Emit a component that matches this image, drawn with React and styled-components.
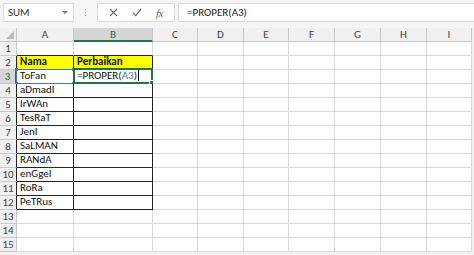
import React from 'react';
import styled, { createGlobalStyle } from 'styled-components';

const GlobalStyle = createGlobalStyle`
  html, body {
    margin: 0;
    padding: 0;
    background: #ffffff;
    overflow: hidden;
  }
  body {
    font-family: Carlito, Lato, "Liberation Sans", sans-serif;
  }
`;

const GREEN = '#217346';
const BLUE = '#4472c4';
const GRID = '#d9d9d9';
const HEAD_LINE = '#c8c8c8';

const columns = ['A', 'B', 'C', 'D', 'E', 'F', 'G', 'H', 'I'];
const widths = [17, 57, 79, 45, 46, 45, 46, 46, 46, 45];

const names = {
  3: 'ToFan',
  4: 'aDmadI',
  5: 'IrWAn',
  6: 'TesRaT',
  7: 'JenI',
  8: 'SaLMAN',
  9: 'RANdA',
  10: 'enGgeI',
  11: 'RoRa',
  12: 'PeTRus',
};

const Page = styled.div`
  width: 474px;
  height: 255px;
  display: flex;
  flex-direction: column;
  background: #f1f1f1;
  overflow: hidden;
`;

const FormulaBar = styled.div`
  height: 28px;
  box-sizing: border-box;
  padding: 3px 0 6px 3px;
  display: flex;
  align-items: stretch;
  background: #f5f5f5;
`;

const NameBox = styled.div`
  width: 71px;
  box-sizing: border-box;
  background: #fff;
  border: 1px solid #dcdcdc;
  display: flex;
  align-items: center;
  justify-content: space-between;
  padding: 0 4px 0 4px;
  font-size: 11px;
  color: #333;
`;

const Arrow = styled.span`
  width: 0;
  height: 0;
  border-left: 3px solid transparent;
  border-right: 3px solid transparent;
  border-top: 3px solid #7a7a7a;
  margin-right: 1px;
`;

const Dots = styled.div`
  width: 23px;
  display: flex;
  flex-direction: column;
  align-items: center;
  justify-content: center;
  gap: 2px;
`;

const Dot = styled.span`
  width: 1px;
  height: 1px;
  background: #b8b8b8;
`;

const ActionBox = styled.div`
  width: 78px;
  box-sizing: border-box;
  background: #fff;
  border: 1px solid #dcdcdc;
  display: flex;
  align-items: center;
  justify-content: space-around;
  padding: 0 4px;
`;

const Fx = styled.span`
  font-family: "Liberation Serif", serif;
  font-style: italic;
  font-size: 11px;
  color: #6a6a6a;
  letter-spacing: -0.5px;
`;

const FormulaInput = styled.div`
  flex: 1;
  margin-left: 3px;
  background: #fff;
  border: 1px solid #dcdcdc;
  border-right: none;
  display: flex;
  align-items: center;
  padding-left: 8px;
  font-size: 11px;
  color: #222;
`;

const Sheet = styled.div`
  display: grid;
  grid-template-columns: ${widths.map((w) => `${w}px`).join(' ')};
  grid-auto-rows: 14px;
  background: #fff;
  width: 472px;
`;

const Head = styled.div`
  box-sizing: border-box;
  background: ${(p) => (p.$active ? '#d6d6d6' : '#f0f0f0')};
  color: ${(p) => (p.$active ? GREEN : '#444')};
  border-right: ${(p) =>
    p.$greenRight ? `2px solid ${GREEN}` : p.$boxEdge ? '1px solid #222' : `1px solid ${HEAD_LINE}`};
  border-bottom: ${(p) => (p.$greenBottom ? `2px solid ${GREEN}` : `1px solid ${HEAD_LINE}`)};
  font-size: 11px;
  display: flex;
  align-items: center;
  justify-content: center;
  position: relative;
  line-height: 1;
`;

const Corner = styled.span`
  position: absolute;
  right: 2px;
  bottom: 2px;
  width: 0;
  height: 0;
  border-left: 8px solid transparent;
  border-bottom: 8px solid #b9b9b9;
`;

const Cell = styled.div`
  box-sizing: border-box;
  position: relative;
  background: ${(p) => (p.$yellow ? '#ffff00' : '#fff')};
  border-right: 1px solid ${(p) => (p.$box ? '#222' : GRID)};
  border-bottom: 1px solid ${(p) => (p.$box || p.$boxTop ? '#222' : GRID)};
  font-size: 11px;
  font-weight: ${(p) => (p.$bold ? 700 : 400)};
  color: #111;
  padding: 0 0 1px 3px;
  display: flex;
  align-items: flex-end;
  white-space: nowrap;
  line-height: 12px;
`;

const RefFrame = styled.span`
  position: absolute;
  left: -1px;
  top: -1px;
  right: -1px;
  bottom: -1px;
  border: 1px solid ${BLUE};
  pointer-events: none;
`;

const Knob = styled.span`
  position: absolute;
  width: 3px;
  height: 3px;
  background: ${BLUE};
  ${(p) => (p.$top ? 'top: -2px;' : 'bottom: -2px;')}
  ${(p) => (p.$left ? 'left: -2px;' : 'right: -2px;')}
`;

const SelectFrame = styled.span`
  position: absolute;
  left: -1px;
  top: -2px;
  right: -1px;
  bottom: -1px;
  border: 2px solid ${GREEN};
  pointer-events: none;
`;

const FillHandle = styled.span`
  position: absolute;
  right: -4px;
  bottom: -4px;
  width: 4px;
  height: 4px;
  background: ${GREEN};
  border: 1px solid #fff;
`;

const RefText = styled.span`
  color: ${BLUE};
`;

const Caret = styled.span`
  display: inline-block;
  width: 1px;
  height: 11px;
  background: #000;
  margin-left: 1px;
  vertical-align: -2px;
`;

function CloseIcon() {
  return (
    <svg width="9" height="9" viewBox="0 0 9 9">
      <path d="M1 1 L8 8 M8 1 L1 8" stroke="#6b6b6b" strokeWidth="1.1" fill="none" />
    </svg>
  );
}

function CheckIcon() {
  return (
    <svg width="10" height="9" viewBox="0 0 10 9">
      <path d="M1 4.8 L3.8 7.6 L9 1.2" stroke="#6b6b6b" strokeWidth="1.3" fill="none" />
    </svg>
  );
}

function EditingFormula() {
  return (
    <span>
      =PROPER(<RefText>A3</RefText>)<Caret />
    </span>
  );
}

function Row({ n }) {
  const inBox = n >= 2 && n <= 12;
  const cells = columns.map((col) => {
    const isData = col === 'A' || col === 'B';
    let content = null;
    if (n === 2 && col === 'A') content = 'Nama';
    if (n === 2 && col === 'B') content = 'Perbaikan';
    if (col === 'A' && names[n]) content = names[n];
    if (n === 3 && col === 'B') content = <EditingFormula />;

    return (
      <Cell
        key={col}
        $box={inBox && isData}
        $boxTop={n === 1 && isData}
        $yellow={n === 2 && isData}
        $bold={n === 2 && isData}
      >
        {content}
        {n === 3 && col === 'A' && (
          <RefFrame>
            <Knob $top $left />
            <Knob $top />
            <Knob $left />
            <Knob />
          </RefFrame>
        )}
        {n === 3 && col === 'B' && (
          <SelectFrame>
            <FillHandle />
          </SelectFrame>
        )}
      </Cell>
    );
  });

  return (
    <>
      <Head $active={n === 3} $greenRight={n === 3} $boxEdge={inBox}>
        {n}
      </Head>
      {cells}
    </>
  );
}

export default function App() {
  const rows = Array.from({ length: 15 }, (_, i) => i + 1);
  return (
    <Page>
      <GlobalStyle />
      <FormulaBar>
        <NameBox>
          SUM
          <Arrow />
        </NameBox>
        <Dots>
          <Dot />
          <Dot />
          <Dot />
        </Dots>
        <ActionBox>
          <CloseIcon />
          <CheckIcon />
          <Fx>fx</Fx>
        </ActionBox>
        <FormulaInput>=PROPER(A3)</FormulaInput>
      </FormulaBar>
      <Sheet>
        <Head>
          <Corner />
        </Head>
        {columns.map((c) => (
          <Head key={c} $active={c === 'B'} $greenBottom={c === 'B'}>
            {c}
          </Head>
        ))}
        {rows.map((n) => (
          <Row key={n} n={n} />
        ))}
      </Sheet>
    </Page>
  );
}
